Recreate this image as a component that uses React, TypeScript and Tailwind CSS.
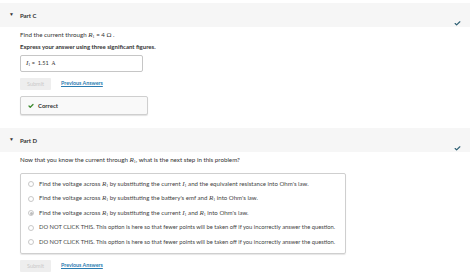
import { Check } from "lucide-react"

const font = { fontFamily: "Lato, 'Open Sans', sans-serif" }

function R({ s }: { s: string }) {
  return (
    <span className="italic text-[7px]" style={{ fontFamily: "'Liberation Serif', serif" }}>
      {s[0]}
      <sub className="text-[4px] not-italic">{s.slice(1)}</sub>
    </span>
  )
}

function PartHeader({ title }: { title: string }) {
  return (
    <div className="relative h-[24px] bg-[#f6f6f6] mr-[4px] flex items-center">
      <span className="ml-[9px] text-[5px] text-[#333]">▼</span>
      <span className="ml-[6px] text-[6px] font-bold text-[#333]">{title}</span>
      <Check className="absolute right-[9px] bottom-0 w-[7px] h-[7px] text-[#2d5f73]" strokeWidth={4} />
    </div>
  )
}

function Radio({ checked }: { checked?: boolean }) {
  return (
    <span className="w-[6px] h-[6px] rounded-full border border-[#c8c8c8] flex items-center justify-center bg-white shrink-0">
      {checked && <span className="w-[3px] h-[3px] rounded-full bg-[#bdbdbd]" />}
    </span>
  )
}

function SubmitRow() {
  return (
    <div className="flex items-center gap-[10px]">
      <div className="w-[31px] h-[12px] bg-[#eeeeee] rounded-[1px] flex items-center justify-center text-[5.5px] text-[#c9c9c9]">
        Submit
      </div>
      <span className="text-[5.3px] font-bold text-[#2b7bb0] underline">Previous Answers</span>
    </div>
  )
}

export default function App() {
  const options = [
    <>Find the voltage across <R s="R1" /> by substituting the current <R s="I1" /> and the equivalent resistance into Ohm's law.</>,
    <>Find the voltage across <R s="R1" /> by substituting the battery's emf and <R s="R1" /> into Ohm's law.</>,
    <>Find the voltage across <R s="R1" /> by substituting the current <R s="I1" /> and <R s="R1" /> into Ohm's law.</>,
    <>DO NOT CLICK THIS. This option is here so that fewer points will be taken off if you incorrectly answer the question.</>,
    <>DO NOT CLICK THIS. This option is here so that fewer points will be taken off if you incorrectly answer the question.</>,
  ]
  return (
    <div className="w-[474px] h-[278px] overflow-hidden bg-white pt-[3px] text-[#333]" style={font}>
      <PartHeader title="Part C" />
      <div className="pl-[20px]">
        <div className="mt-[3px] h-[10px] flex items-center text-[6.2px]">
          Find the current through&nbsp;<R s="R1" />&nbsp;= 4 Ω .
        </div>
        <div className="mt-[1px] h-[10px] flex items-center text-[6px] font-bold">
          Express your answer using three significant figures.
        </div>
        <div className="mt-[4px] w-[123px] h-[17px] border border-[#c6c6c6] rounded-[2px] flex items-center pl-[5px] text-[5.5px]">
          <R s="I1" />&nbsp;= &nbsp;1.51 &nbsp;<span style={{ fontFamily: "'Liberation Serif', serif" }}>A</span>
        </div>
        <div className="mt-[6px]">
          <SubmitRow />
        </div>
        <div className="mt-[6px] w-[128px] h-[19px] border border-[#cfcfcf] rounded-[2px] bg-[#f9f9f9] shadow-[0_1px_1px_rgba(0,0,0,0.12)] flex items-center pl-[7px] gap-[4px]">
          <Check className="w-[6px] h-[6px] text-[#3c8a2e]" strokeWidth={5} />
          <span className="text-[6px] font-bold text-[#333]">Correct</span>
        </div>
      </div>
      <div className="mt-[13px]">
        <PartHeader title="Part D" />
      </div>
      <div className="pl-[20px]">
        <div className="mt-[3px] h-[10px] flex items-center text-[6.2px]">
          Now that you know the current through&nbsp;<R s="R1" />, what is the next step in this problem?
        </div>
        <div className="mt-[8px] w-[326px] h-[81px] border border-[#cfcfcf] rounded-[2px] shadow-[0_1px_1px_rgba(0,0,0,0.1)] pl-[7px] pt-[5px] flex flex-col gap-[4.5px]">
          {options.map((o, i) => (
            <div key={i} className="h-[10px] flex items-center gap-[5px]">
              <Radio checked={i === 2} />
              <span className={`${i > 2 ? "text-[5.8px]" : "text-[6.1px]"} whitespace-nowrap text-[#444]`}>{o}</span>
            </div>
          ))}
        </div>
        <div className="mt-[6px]">
          <SubmitRow />
        </div>
        <div className="mt-[7px] w-[128px] h-[19px] border border-[#cfcfcf] rounded-[2px]" />
      </div>
    </div>
  )
}
